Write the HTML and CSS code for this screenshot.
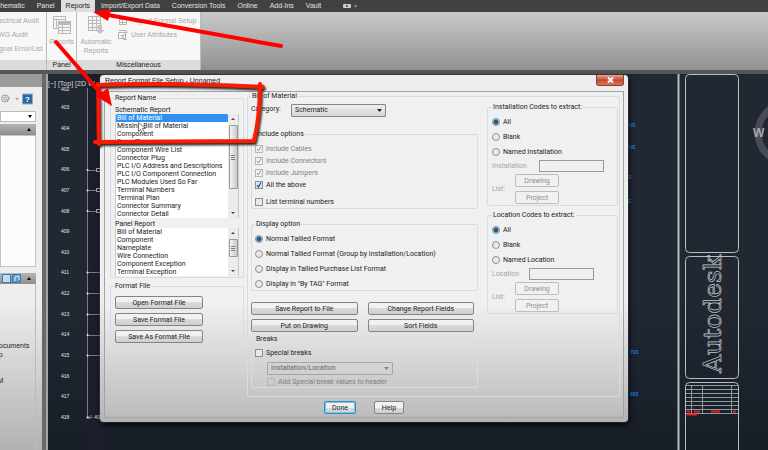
FILE: index.html
```html
<!DOCTYPE html>
<html lang="en">
<head>
    <meta charset="UTF-8">
    <meta name="viewport" content="width=device-width, initial-scale=1.0">
    <title>Report Format File Setup</title>
    <link rel="stylesheet" href="styles.css">
</head>
<body>
    <nav class="tabs">
        <a href="#" class="tab-first">Schematic</a>
        <a href="#">Panel</a>
        <a href="#" class="active">Reports</a>
        <a href="#">Import/Export Data</a>
        <a href="#">Conversion Tools</a>
        <a href="#">Online</a>
        <a href="#">Add-Ins</a>
        <a href="#">Vault</a>
        <svg class="tab-more" width="15" height="6" viewBox="0 0 15 6"><rect x="0" y="1" width="8" height="4" rx="1" fill="#ccc"/><circle cx="4" cy="3" r="1" fill="#444"/><path d="M11 2.500h3l-1.500 2z" fill="#bbb"/></svg>
    </nav>

    <header class="ribbon">
        <section class="panel panel-audit">
            <div class="panel-body">
                <ul class="commands">
                    <li>Electrical Audit</li>
                    <li>DWG Audit</li>
                    <li>Signal Error/List</li>
                </ul>
            </div>
            <h2></h2>
        </section>
        <section class="panel panel-reports">
            <div class="panel-body">
                <button class="big" disabled>
                    <svg width="20" height="20" viewBox="0 0 20 20" fill="#f4f4f4" stroke="#b9b9b9"><rect x="1.500" y="1.500" width="12" height="12"/><path d="M1.500 4.500h12M4.500 4.500v9"/><rect x="6.500" y="6.500" width="12" height="12"/><path d="M6.500 8.500h12" stroke-width="3"/><path d="M6.500 12.500h12M6.500 15.500h12M10.500 9.500v9"/></svg>
                    <span>Reports</span>
                </button>
            </div>
            <h2>Panel</h2>
        </section>
        <section class="panel panel-misc">
            <div class="panel-body">
                <button class="big" disabled>
                    <svg width="20" height="20" viewBox="0 0 20 20" fill="#f4f4f4" stroke="#b9b9b9"><rect x="2.500" y="1.500" width="12" height="14"/><path d="M2.500 5.500h12M2.500 8.500h12M2.500 12.500h12M6.500 1.500v14M10.500 1.500v14"/><path d="M12 10h4v5h3l-5 4-5-4h3z" fill="#c4c4c4" stroke="none"/></svg>
                    <span>Automatic<br>Reports</span>
                </button>
                <ul class="commands">
                    <li><svg width="10" height="10" viewBox="0 0 10 10" fill="none" stroke="#b5b5b5"><path d="M1.500 1.500h7v7h-7zM1.500 3.500h7M1.500 6.500h7M4.500 3.500v5"/></svg> Report Format Setup</li>
                    <li><svg width="10" height="10" viewBox="0 0 10 10" fill="none" stroke="#b0b0b0"><path d="M.5 2.500h7v6h-7zM2.500 5.500h3M1 .5h6M4 8l5-6M7 .5l2.500 1.500M5.500 9.500h3"/></svg> User Attributes</li>
                </ul>
            </div>
            <h2>Miscellaneous</h2>
        </section>
    </header>

    <main class="workspace">
        <aside class="palette">
            <div class="palette-title"></div>
            <div class="palette-tools">
                <svg width="10" height="12" viewBox="0 0 10 12" fill="none" stroke="#999"><circle cx="4" cy="5.500" r="3.500"/><circle cx="4" cy="5.500" r="1.500"/><path d="M5 9l4-5"/></svg>
                <svg width="5" height="12" viewBox="0 0 5 12"><path d="M1 5h4l-2 2z" fill="#999"/></svg>
                <svg width="11" height="12" viewBox="0 0 11 12"><rect x=".5" y="1" width="10" height="10" fill="#2b68a8" stroke="#9ab"/><text x="3" y="9" class="help-mark">?</text></svg>
            </div>
            <div class="palette-combo"><svg width="4" height="3" viewBox="0 0 4 3"><path d="M0 0h4l-2 3z"/></svg></div>
            <div class="palette-bar"><svg width="4" height="3" viewBox="0 0 4 3"><path d="M0 3h4l-2-3z"/></svg></div>
            <div class="palette-tree"></div>
            <div class="palette-bar details-bar">
                <svg width="20" height="9" viewBox="0 0 20 9"><rect x=".5" y=".5" width="8" height="8" fill="#bcdff2" stroke="#3a7ab0"/><rect x="10.500" y=".5" width="8" height="8" fill="#5a9bc8" stroke="#3a7ab0"/><path d="M13 7V3l4-1v4" fill="none" stroke="#e8f4fb"/></svg>
                <svg width="4" height="3" viewBox="0 0 4 3"><path d="M0 3h4l-2-3z"/></svg>
            </div>
            <ul class="details">
                <li>Documents</li>
                <li class="desktop">Desktop</li>
                <li class="rom">ROM</li>
            </ul>
        </aside>
        <div class="splitter"></div>

        <div class="canvas">
            <!-- ladder rungs on the left of the drawing -->
            <svg class="ladder" width="56" height="376" viewBox="48 74 56 376">
                <rect x="88" y="74" width="16" height="376" fill="#1b1e2b"/>
                <g stroke="#777b82">
                    <path d="M87.500 88V418M87 170.500h17M87 190.500h17M87 211.500h17M87 272.500h17M87 293.500h17M87 314.500h17M87 335.500h17M87 355.500h17"/>
                </g>
                <g fill="#1b1e2b" stroke="#b5b8bd"><path d="M96.500 168.500h4v3h-4zM96.500 188.500h4v3h-4zM96.500 209.500h4v3h-4z"/></g>
                <g fill="#e6e8ea"><circle cx="87.500" cy="170" r="1"/><circle cx="87.500" cy="190.500" r="1"/><circle cx="87.500" cy="211" r="1"/><circle cx="87.500" cy="272.500" r="1"/><circle cx="87.500" cy="293.500" r="1"/><circle cx="87.500" cy="314.500" r="1"/><circle cx="87.500" cy="335" r="1"/><circle cx="87.500" cy="355.500" r="1"/><circle cx="87.500" cy="417.500" r="1"/></g>
                <g class="rung-labels">
                    <text x="61" y="91">402</text><text x="61" y="109">403</text><text x="61" y="130">404</text><text x="61" y="151">405</text><text x="61" y="171">406</text><text x="61" y="192">407</text><text x="61" y="213">408</text><text x="61" y="233">409</text><text x="61" y="254">410</text><text x="61" y="274">411</text><text x="61" y="295">412</text><text x="61" y="316">413</text><text x="61" y="336">414</text><text x="61" y="357">415</text><text x="61" y="378">416</text><text x="61" y="398">417</text><text x="61" y="419">418</text>
                    <text x="87" y="419">+/- 40</text>
                </g>
                <text x="48" y="86" class="view-label">[−] [Top] [2D W</text>
            </svg>

            <!-- title block of the sheet -->
            <svg class="sheet" width="140" height="376" viewBox="628 74 140 376">
                <g class="wire-labels"><text x="629" y="127">UE</text><text x="629" y="149">UE</text><text x="628" y="179">S</text><text x="628" y="203">E</text><text x="630" y="354">703</text><text x="630" y="396">403</text></g>
                <g fill="none" stroke="#b9bdc1">
                    <path d="M678.500 74V450" stroke-width="2"/>
                    <rect x="685.500" y="74.500" width="53" height="178" rx="4"/>
                    <rect x="685.500" y="256.500" width="53" height="122" rx="4"/>
                    <rect x="685.500" y="382.500" width="53" height="80" rx="4"/>
                    <path d="M686 385.500h52M686 389.500h52M686 393.500h52M686 397.500h52M686 401.500h52M686 405.500h52M686 409.500h52M686 413.500h52M691.500 385v28M702.500 385v28M731.500 385v28" stroke="#92979c"/>
                </g>
                <path d="M687 411.500h3M694 411.500h6M711 411.500h9M733 411.500h3M687 414.500h10" stroke="#e3231b" stroke-width="2"/>
                <text class="brand" transform="translate(721 373) rotate(-90)">Autodesk</text>
                <circle cx="787" cy="133" r="29" fill="none" stroke="#464b55" stroke-width="7"/>
                <text x="753" y="137" class="compass">W</text>
            </svg>
        </div>

        <form class="dialog">
            <div class="titlebar">
                <h1>Report Format File Setup - Unnamed</h1>
                <button type="button" class="close" aria-label="Close"><svg width="7" height="6" viewBox="0 0 7 6"><path d="M1 .5l5 5M6 .5l-5 5" stroke="#fff" stroke-width="2"/></svg></button>
            </div>
            <div class="content">
                <div class="columns">
                    <div class="left">
                        <fieldset class="report-name">
                            <legend>Report Name</legend>
                            <label for="schematic">Schematic Report</label>
                            <div class="listbox">
                                <select id="schematic" size="13">
                                    <option selected>Bill of Material</option>
                                    <option>Missing Bill of Material</option>
                                    <option>Component</option>
                                    <option>From/To</option>
                                    <option>Component Wire List</option>
                                    <option>Connector Plug</option>
                                    <option>PLC I/O Address and Descriptions</option>
                                    <option>PLC I/O Component Connection</option>
                                    <option>PLC Modules Used So Far</option>
                                    <option>Terminal Numbers</option>
                                    <option>Terminal Plan</option>
                                    <option>Connector Summary</option>
                                    <option>Connector Detail</option>
                                </select>
                                <div class="scroll"><i class="up"></i><b class="thumb tall"></b><i class="down"></i></div>
                            </div>
                            <label for="panel" class="second">Panel Report</label>
                            <div class="listbox">
                                <select id="panel" size="6">
                                    <option>Bill of Material</option>
                                    <option>Component</option>
                                    <option>Nameplate</option>
                                    <option>Wire Connection</option>
                                    <option>Component Exception</option>
                                    <option>Terminal Exception</option>
                                </select>
                                <div class="scroll"><i class="up"></i><b class="thumb"></b><i class="down"></i></div>
                            </div>
                        </fieldset>
                        <fieldset class="format-file">
                            <legend>Format File</legend>
                            <button type="button">Open Format File</button>
                            <button type="button">Save Format File</button>
                            <button type="button">Save As Format File</button>
                        </fieldset>
                    </div>

                    <fieldset class="bom">
                        <legend>Bill of Material</legend>
                        <div class="bom-grid">
                            <div class="options">
                                <div class="category">
                                    <label for="category">Category:</label>
                                    <select id="category" class="combo"><option>Schematic</option></select>
                                </div>
                                <fieldset class="include">
                                    <legend>Include options</legend>
                                    <label class="off"><input type="checkbox" checked disabled>Include Cables</label>
                                    <label class="off"><input type="checkbox" checked disabled>Include Connectors</label>
                                    <label class="off"><input type="checkbox" checked disabled>Include Jumpers</label>
                                    <label><input type="checkbox" checked>All the above</label>
                                    <label class="apart"><input type="checkbox">List terminal numbers</label>
                                </fieldset>
                                <fieldset class="display">
                                    <legend>Display option</legend>
                                    <label><input type="radio" name="display" checked>Normal Tallied Format</label>
                                    <label><input type="radio" name="display">Normal Tallied Format (Group by Installation/Location)</label>
                                    <label><input type="radio" name="display">Display in Tallied Purchase List Format</label>
                                    <label><input type="radio" name="display">Display in "By TAG" Format</label>
                                </fieldset>
                                <div class="actions">
                                    <button type="button">Save Report to File</button>
                                    <button type="button">Change Report Fields</button>
                                    <button type="button">Put on Drawing</button>
                                    <button type="button">Sort Fields</button>
                                </div>
                                <fieldset class="breaks">
                                    <legend>Breaks</legend>
                                    <label><input type="checkbox">Special breaks</label>
                                    <select class="combo" aria-label="Special breaks" disabled><option>Installation/Location</option></select>
                                    <label class="off indent"><input type="checkbox" disabled>Add Special break values to header</label>
                                </fieldset>
                            </div>

                            <div class="codes">
                                <fieldset>
                                    <legend>Installation Codes to extract:</legend>
                                    <label><input type="radio" name="inst" checked>All</label>
                                    <label><input type="radio" name="inst">Blank</label>
                                    <label><input type="radio" name="inst">Named Installation</label>
                                    <div class="named">
                                        <label for="installation">Installation</label>
                                        <input type="text" id="installation" disabled>
                                    </div>
                                    <div class="from-list">
                                        <span>List:</span>
                                        <div>
                                            <button type="button" disabled>Drawing</button>
                                            <button type="button" disabled>Project</button>
                                        </div>
                                    </div>
                                </fieldset>
                                <fieldset>
                                    <legend>Location Codes to extract:</legend>
                                    <label><input type="radio" name="loc" checked>All</label>
                                    <label><input type="radio" name="loc">Blank</label>
                                    <label><input type="radio" name="loc">Named Location</label>
                                    <div class="named named-location">
                                        <label for="location">Location</label>
                                        <input type="text" id="location" disabled>
                                    </div>
                                    <div class="from-list">
                                        <span>List:</span>
                                        <div>
                                            <button type="button" disabled>Drawing</button>
                                            <button type="button" disabled>Project</button>
                                        </div>
                                    </div>
                                </fieldset>
                            </div>
                        </div>
                    </fieldset>
                </div>
                <div class="footer">
                    <button type="button" class="default">Done</button>
                    <button type="button">Help</button>
                </div>
            </div>
        </form>
    </main>

    <!-- red pen marks and mouse pointer -->
    <svg class="marks" width="300" height="160" viewBox="0 0 300 160">
        <path d="M138.500 122.500v9l2-2 2 4 2-1-2-4h3z" fill="#fff" stroke="#444" stroke-width=".7"/>
        <g class="frame">
            <path d="M98 85C150 83 205 84 263 87M260 84C260 105 258 125 254 141M95 142L254 141M98 84C99 105 98 125 99 144"/>
        </g>
        <path d="M281 46L108 15M56 42L104 97" stroke="#f00" stroke-width="4" stroke-linecap="round"/>
        <path d="M93 12L111 9 108 21zM112 106L96 96 108 88z" fill="#f00"/>
    </svg>
</body>
</html>
```

FILE: styles.css
```css
* {
    box-sizing: border-box;
    margin: 0;
    padding: 0;
}

body {
    position: relative;
    display: flex;
    flex-direction: column;
    min-height: 100vh;
    overflow: hidden;
    font-family: "Liberation Sans", Arial, sans-serif;
    font-size: 7px;
    line-height: 8px;
    color: #222;
    background-color: #1b222a;
}

ul {
    list-style: none;
}

/* ribbon */
.tabs {
    display: flex;
    align-items: center;
    height: 12px;
    background-color: #414141;
}

.tabs a {
    padding: 2px 6px;
    color: #e2e2e2;
    text-decoration: none;
    white-space: nowrap;
}

.tabs .tab-first {
    margin-left: -14px;
}

.tabs .active {
    padding: 2px 5px;
    background-color: #dedede;
    color: #222;
}

.tab-more {
    margin-left: 16px;
}

.ribbon {
    display: flex;
    height: 58px;
    background: linear-gradient(#c9c9c9, #919191);
}

.panel {
    display: flex;
    flex-direction: column;
    border-right: 1px solid #bbb;
    background-color: #f7f7f7;
}

.panel-audit {
    width: 47px;
    overflow: hidden;
}

.panel-audit .commands {
    margin-left: -7px;
}

.panel-reports {
    width: 30px;
}

.panel-misc {
    width: 124px;
}

.panel-body {
    display: flex;
    flex: 1;
    gap: 3px;
    color: #a8a8a8;
}

.panel h2 {
    height: 10px;
    background-color: #dcdcdc;
    font-size: 7px;
    font-weight: normal;
    line-height: 10px;
    text-align: center;
}

.big {
    display: flex;
    flex-direction: column;
    align-items: center;
    gap: 2px;
    width: 100%;
    padding-top: 3px;
    border: none;
    background: none;
    color: #a8a8a8;
    font: inherit;
    line-height: 9px;
}

.panel-misc .big {
    width: 38px;
}

.commands {
    padding-top: 2px;
    white-space: nowrap;
}

.commands li {
    display: flex;
    align-items: center;
    gap: 3px;
    height: 14px;
}

/* drawing area */
.workspace {
    position: relative;
    display: flex;
    flex: 1;
    border-top: 4px solid #565656;
}

.palette {
    display: flex;
    flex-direction: column;
    width: 42px;
    overflow: hidden;
    background: linear-gradient(#eee 60%, #b2b2b2);
}

.palette-title {
    height: 13px;
    background-color: #9b9b9b;
}

.palette-tools {
    display: flex;
    align-items: center;
    gap: 3px;
    height: 24px;
    padding-left: 1px;
}

.help-mark {
    fill: #fff;
    font-size: 8px;
    font-weight: bold;
}

.palette-combo, .palette-bar {
    display: flex;
    align-items: center;
    justify-content: flex-end;
    width: 36px;
    height: 11px;
    padding-right: 3px;
}

.palette-combo {
    margin-bottom: 2px;
    border: 1px solid #bbb;
    background-color: #fff;
}

.palette-bar {
    padding-right: 5px;
    background: linear-gradient(#b5b5b5, #8e8e8e);
}

.palette-tree {
    width: 36px;
    height: 132px;
    border: 1px solid #c4c4c4;
    background-color: #fbfbfb;
}

.details-bar {
    gap: 5px;
    margin-top: 6px;
}

.details {
    flex: 1;
    width: 36px;
    padding-top: 57px;
    border-right: 1px solid #bbb;
    line-height: 9px;
}

.details li {
    margin-left: -6px;
}

.details .desktop {
    margin-left: -23px;
}

.details .rom {
    margin: 17px 0 0 -13px;
}

.splitter {
    width: 6px;
    border-right: 2px solid #a3a6a8;
    background-color: #686a6a;
}

.canvas {
    position: relative;
    flex: 1;
    background: linear-gradient(#212832 60%, #171e26);
}

.ladder {
    position: absolute;
    top: 0;
    left: 0;
}

.sheet {
    position: absolute;
    top: 0;
    right: 0;
}

.rung-labels {
    fill: #e6e8ea;
    font-size: 5px;
}

.view-label {
    fill: #d5d7d9;
    font-size: 7px;
}

.wire-labels {
    fill: #1a7cf0;
    font-size: 5px;
    font-weight: bold;
}

.brand {
    fill: none;
    stroke: #c4c8cc;
    stroke-width: 0.7px;
    font-family: "DejaVu Serif", serif;
    font-size: 25px;
}

.compass {
    fill: #a6a9ad;
    font-size: 12px;
    font-weight: bold;
}

/* dialog */
.dialog {
    position: absolute;
    top: 1px;
    left: 100px;
    width: 528px;
    padding: 0 4px 4px;
    border-radius: 4px;
    background: linear-gradient(#eee 65%, #b4b4b4);
    box-shadow: 0 0 1px #ddd, 1px 3px 6px rgba(0, 0, 0, 0.8);
    font-family: Roboto, "Liberation Sans", sans-serif;
}

.titlebar {
    display: flex;
    justify-content: space-between;
    height: 16px;
}

.titlebar h1 {
    padding: 2px 1px;
    font-family: "Liberation Sans", Arial, sans-serif;
    font-size: 7px;
    font-weight: normal;
    line-height: 8px;
}

.dialog .close {
    display: flex;
    align-items: center;
    justify-content: center;
    width: 28px;
    height: 11px;
    border: 1px solid #8a4034;
    border-top: none;
    border-radius: 0 0 3px 3px;
    background: linear-gradient(#e5a698, #c8492f 50%, #dd7556);
}

.content {
    padding: 0 3px 3px 5px;
    border: 1px solid #a2a2a2;
    background: linear-gradient(#f0f0f0 65%, #bcbcbc);
}

.columns {
    display: flex;
    gap: 3px;
}

.left {
    display: flex;
    flex-direction: column;
    gap: 4px;
    width: 134px;
    padding-top: 2px;
}

fieldset {
    min-width: 0;
    border: 1px solid #d5dce3;
    border-radius: 2px;
}

legend {
    padding: 0 1px;
}

.dialog label {
    display: flex;
    align-items: center;
    gap: 3px;
    height: 9px;
    white-space: nowrap;
}

.report-name {
    padding: 3px 4px 1px;
}

.report-name .second {
    margin-top: 1px;
}

.report-name legend, .format-file legend {
    margin-left: -1px;
}

.listbox {
    display: flex;
    border: 1px solid #c3c8ce;
    border-width: 0 1px;
    background-color: #fff;
}

.listbox select {
    flex: 1;
    min-width: 0;
    overflow: hidden;
    border: none;
    background-color: #fff;
    font: inherit;
    color: #222;
    outline: none;
    scrollbar-width: none;
}

.listbox option {
    min-height: 8px;
    height: 8px;
    padding: 0 1px;
    line-height: 8px;
}

.listbox option:checked {
    background: #3399ff linear-gradient(#2f90f2, #2f90f2);
    color: #fff;
}

.scroll {
    display: flex;
    flex-direction: column;
    align-items: center;
    width: 10px;
    background-color: #ececec;
}

.scroll i {
    width: 4px;
    height: 2px;
    background-color: #444;
}

.up {
    margin: 4px 0 5px;
    clip-path: polygon(50% 0, 100% 100%, 0 100%);
}

.down {
    margin: auto 0 4px;
    clip-path: polygon(0 0, 100% 0, 50% 100%);
}

.thumb {
    display: flex;
    width: 9px;
    height: 18px;
    border: 1px solid #999;
    border-radius: 1px;
    background: linear-gradient(90deg, #f5f5f5, #c8c8c8);
}

.thumb::after {
    content: "";
    width: 4px;
    height: 5px;
    margin: auto;
    background: repeating-linear-gradient(#777 0 1px, #eee 1px 2px);
}

.tall {
    height: 64px;
}

.dialog button {
    height: 13px;
    border: 1px solid #858585;
    border-radius: 2px;
    background: linear-gradient(#f1f1f1 50%, #dadada 50%, #cfcfcf);
    color: #222;
    font: inherit;
}

.dialog .close {
    height: 11px;
    border-color: #8a4034;
    background: linear-gradient(#e5a698, #c8492f 50%, #dd7556);
}

.dialog button:disabled {
    border-color: #bdbdbd;
    background: #f1f1f1;
    color: #8f8f8f;
}

.format-file {
    display: flex;
    flex-direction: column;
    gap: 4px;
    padding: 6px 40px 1px 4px;
}

.bom {
    flex: 1;
    padding: 0 1px 8px 3px;
}

.bom-grid {
    display: flex;
    gap: 9px;
}

.options {
    width: 227px;
    padding-top: 4px;
}

.category {
    display: flex;
    gap: 11px;
    margin-bottom: 13px;
}

.combo {
    appearance: none;
    width: 95px;
    height: 13px;
    padding: 0 3px;
    border: 1px solid #858585;
    border-radius: 1px;
    background: url("data:image/svg+xml,%3Csvg xmlns='http://www.w3.org/2000/svg' width='5' height='3'%3E%3Cpath d='M0 0h5l-2.500 3z' fill='%23222'/%3E%3C/svg%3E") no-repeat right 3px center, linear-gradient(#efefef, #d6d6d6);
    color: #222;
    font: inherit;
    line-height: 11px;
}

.combo:disabled {
    opacity: 1;
    width: 126px;
    border-color: #a5a5a5;
    background: url("data:image/svg+xml,%3Csvg xmlns='http://www.w3.org/2000/svg' width='5' height='3'%3E%3Cpath d='M0 0h5l-2.500 3z' fill='%23888'/%3E%3C/svg%3E") no-repeat right 3px center;
    color: #666;
}

.category label {
    width: 29px;
}

.include, .display, .breaks, .codes fieldset {
    display: flex;
    flex-direction: column;
}

.include {
    gap: 3px;
    margin-bottom: 11px;
    padding: 6px 3px 2px;
}

.include .apart {
    margin-top: 5px;
}

.display {
    gap: 6px;
    margin-bottom: 11px;
    padding: 6px 3px 2px;
}

.off {
    color: #808080;
}

input[type="checkbox"], input[type="radio"] {
    appearance: none;
    flex: none;
    width: 8px;
    height: 8px;
    border: 1px solid #8f8f8f;
    background-color: #e9e9e9;
}

input[type="radio"] {
    border-radius: 50%;
}

input[type="radio"]:checked {
    background: radial-gradient(circle, #1c5f92 0 2px, #c3d8e6 3px);
}

input[type="checkbox"]:checked {
    background: url("data:image/svg+xml,%3Csvg xmlns='http://www.w3.org/2000/svg' width='6' height='6'%3E%3Cpath d='M1 3l1.500 2L5 .5' fill='none' stroke='%23204a8c' stroke-width='1.200'/%3E%3C/svg%3E") no-repeat center, #dde8f2;
}

input[type="checkbox"]:disabled {
    border-color: #b5b5b5;
    background-color: transparent;
}

input[type="checkbox"]:checked:disabled {
    background-image: url("data:image/svg+xml,%3Csvg xmlns='http://www.w3.org/2000/svg' width='6' height='6'%3E%3Cpath d='M1 3l1.500 2L5 .5' fill='none' stroke='%23999'/%3E%3C/svg%3E");
}

.actions {
    display: grid;
    grid-template-columns: 1fr 1fr;
    gap: 4px 10px;
    margin-bottom: 3px;
    padding-right: 4px;
}

.breaks {
    padding: 5px 3px 1px;
}

.breaks .combo {
    margin: 5px 0 2px 12px;
}

.indent {
    margin-left: 12px;
}

.codes {
    display: flex;
    flex: 1;
    flex-direction: column;
    gap: 5px;
    padding-top: 3px;
}

.codes fieldset {
    gap: 6px;
    padding: 6px 4px 1px;
}

.named {
    display: flex;
    align-items: center;
    gap: 10px;
    margin: -2px 0 -4px;
    color: #a5a5a5;
}

.named label {
    width: 37px;
}

.named-location label {
    width: 27px;
}

.named input {
    width: 65px;
    height: 12px;
    border: 1px solid #999;
    background-color: transparent;
}

.from-list {
    display: flex;
    align-items: center;
    color: #a5a5a5;
}

.from-list span {
    width: 23px;
}

.from-list div {
    display: grid;
    gap: 4px;
    width: 44px;
}

.footer {
    display: flex;
    gap: 18px;
    padding: 4px 0 0 214px;
}

.footer button {
    width: 30px;
}

.footer .default {
    width: 32px;
    border-color: #2f8fc0;
    box-shadow: inset 0 0 0 1px #7cc4e6;
}

/* annotations over everything */
.marks {
    position: absolute;
    top: 0;
    left: 0;
    fill: none;
    pointer-events: none;
}

.frame {
    stroke: #fb1a04;
    stroke-width: 4px;
    stroke-linecap: round;
    filter: drop-shadow(1px 2px 1px #222);
}
```
